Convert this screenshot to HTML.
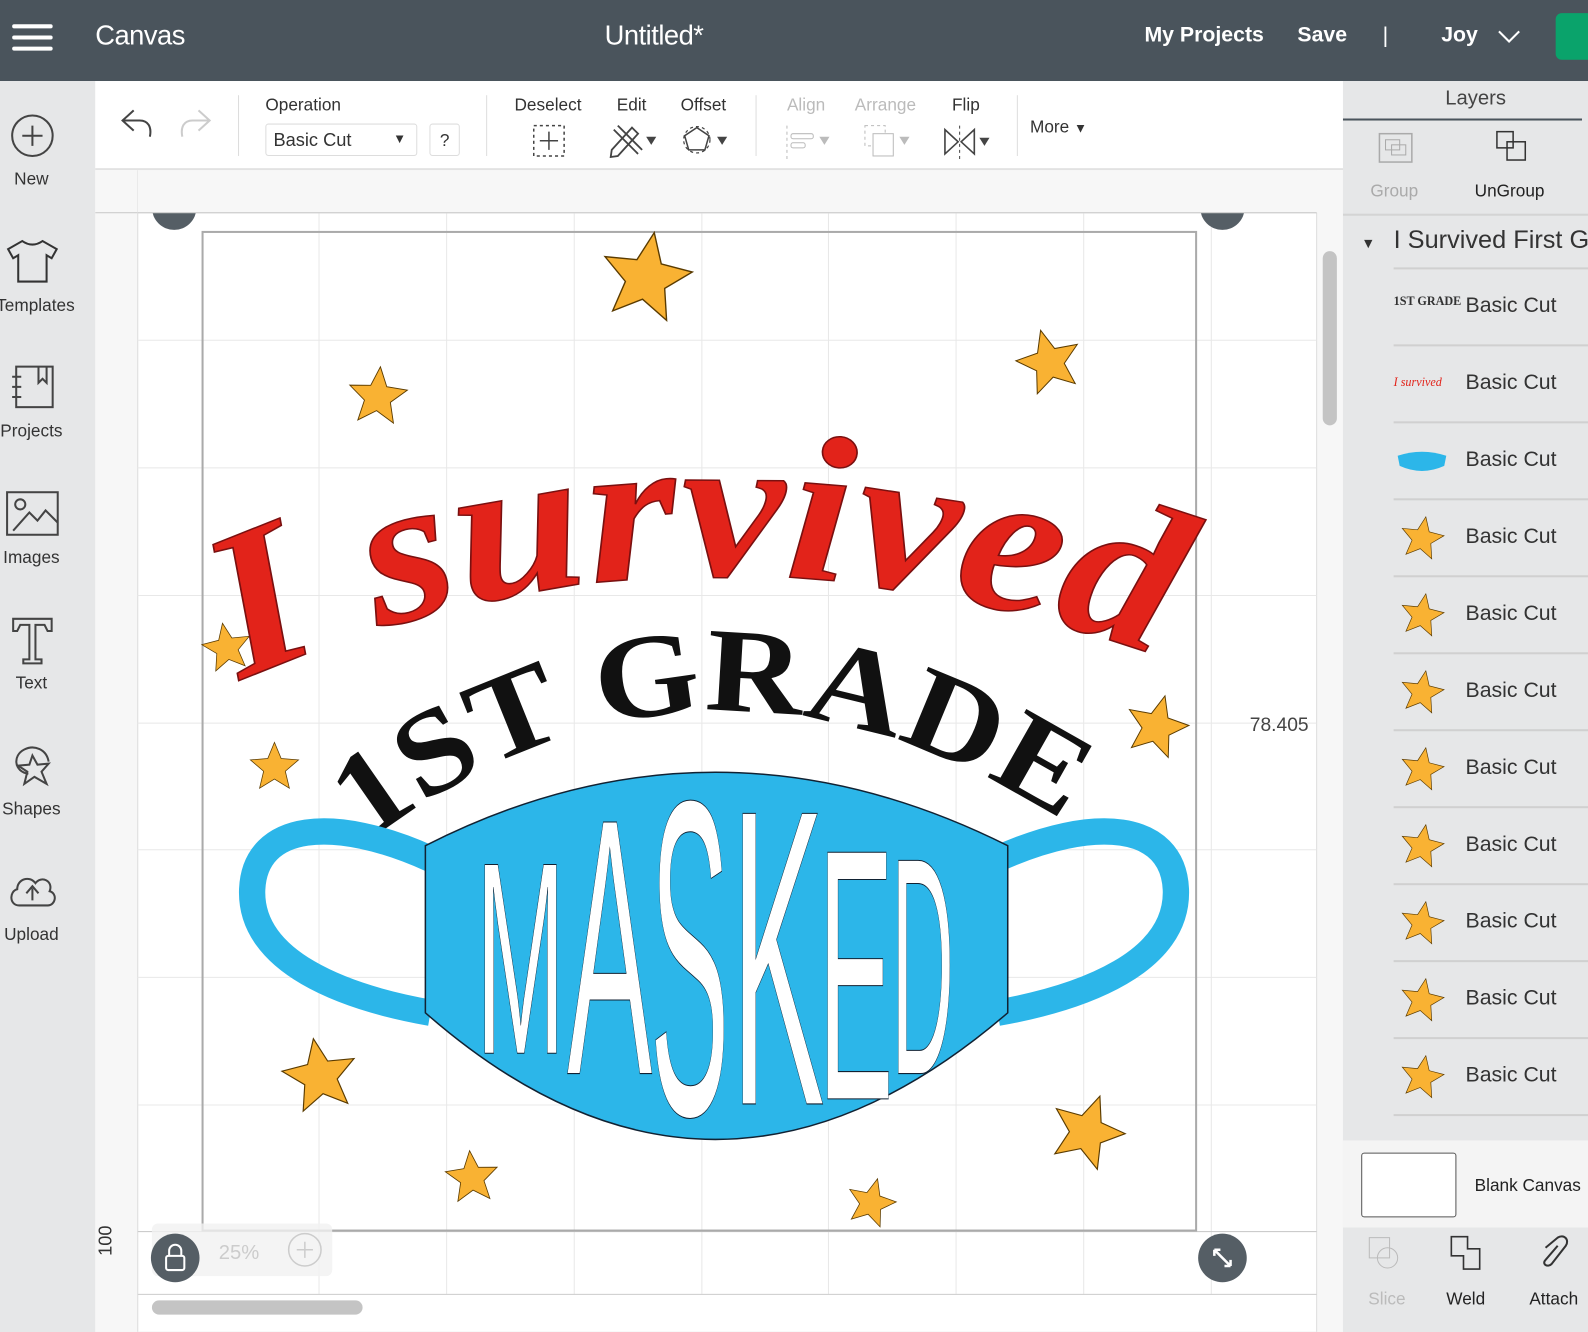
<!DOCTYPE html>
<html><head><meta charset="utf-8"><style>
*{margin:0;padding:0;box-sizing:border-box}
html,body{width:1588px;height:1315px;overflow:hidden;background:#e6e7e8}
#wrap{position:absolute;left:0;top:0;width:1568px;height:1300px;transform:scale(1.0128);transform-origin:0 0;font-family:"Liberation Sans",sans-serif;background:#e6e7e8}
.abs{position:absolute}
.top{left:0;top:0;width:1568px;height:80px;background:#4a545c;color:#fff}
.side{left:0;top:80px;width:94px;height:1235px;background:#e6e7e8}
.side .it{position:absolute;left:0;width:94px;text-align:center;font-size:17px;color:#333}
.tb{left:94px;top:80px;width:1232px;height:88px;background:#fff;border-bottom:2px solid #e2e2e2}
.lbl{position:absolute;font-size:17px;color:#333}
.dim{color:#bbb}
.vsep{position:absolute;top:14px;width:1px;height:60px;background:#ddd}
.rp{left:1326px;top:80px;width:262px;height:1235px;background:#e6e7e8}
.row{position:absolute;left:0;width:262px;height:76px}
.row .line{position:absolute;left:50px;right:0;bottom:0;height:2px;background:#d0d0d0}
.row span{position:absolute;left:121px;top:24px;font-size:21px;color:#333}
</style></head><body><div id="wrap">
<div class="abs top">
  <div class="abs" style="left:12px;top:24px;width:40px;height:4px;background:#fff;border-radius:2px"></div>
  <div class="abs" style="left:12px;top:35px;width:40px;height:4px;background:#fff;border-radius:2px"></div>
  <div class="abs" style="left:12px;top:46px;width:40px;height:4px;background:#fff;border-radius:2px"></div>
  <div class="abs" style="left:94px;top:20px;font-size:27px;letter-spacing:-0.5px">Canvas</div>
  <div class="abs" style="left:597px;top:20px;font-size:27px;letter-spacing:-0.5px">Untitled*</div>
  <div class="abs" style="left:1130px;top:23px;font-size:21px;font-weight:bold">My Projects</div>
  <div class="abs" style="left:1281px;top:23px;font-size:21px;font-weight:bold">Save</div>
  <div class="abs" style="left:1365px;top:22px;font-size:22px">|</div>
  <div class="abs" style="left:1423px;top:23px;font-size:21px;font-weight:bold">Joy</div>
  <svg class="abs" style="left:1478px;top:28px" width="24" height="16"><path d="M2 3 L12 13 L22 3" stroke="#fff" stroke-width="2" fill="none"/></svg>
  <div class="abs" style="left:1536px;top:13px;width:60px;height:46px;background:#0aa36b;border-radius:6px"></div>
</div>

<div class="abs side">
  <svg class="abs" style="left:10px;top:32px" width="44" height="44"><circle cx="22" cy="22" r="20" stroke="#444" stroke-width="2" fill="none"/><path d="M22 12v20M12 22h20" stroke="#444" stroke-width="2"/></svg>
  <div class="it" style="left:-16px;top:87px">New</div>
  <svg class="abs" style="left:6px;top:155px" width="52" height="46"><path d="M16 3 Q26 10 36 3 L50 11 L45 20 L40 17 L40 43 L12 43 L12 17 L7 20 L2 11 Z" stroke="#333" stroke-width="2" fill="none"/></svg>
  <div class="it" style="left:-12px;top:212px">Templates</div>
  <svg class="abs" style="left:10px;top:280px" width="46" height="46"><rect x="6" y="2" width="36" height="40" stroke="#444" stroke-width="2" fill="none"/><path d="M28 2v16l4-4 4 4V2M2 12h9M2 22h9M2 32h9" stroke="#444" stroke-width="2" fill="none"/></svg>
  <div class="it" style="left:-16px;top:336px">Projects</div>
  <svg class="abs" style="left:5px;top:404px" width="54" height="46"><rect x="2" y="2" width="50" height="42" stroke="#444" stroke-width="2" fill="none"/><circle cx="15" cy="14" r="5" stroke="#444" stroke-width="2" fill="none"/><path d="M8 40 L24 22 L32 30 L40 20 L52 32" stroke="#444" stroke-width="2" fill="none"/></svg>
  <div class="it" style="left:-16px;top:461px">Images</div>
  <svg class="abs" style="left:10px;top:528px" width="44" height="50"><path d="M3 3h38v12h-4l-3-6h-9v34h6v4H13v-4h6V9h-9l-3 6H3z" stroke="#444" stroke-width="2" fill="none"/></svg>
  <div class="it" style="left:-16px;top:585px">Text</div>
  <svg class="abs" style="left:10px;top:652px" width="46" height="48"><path d="M18 32 C4 30 2 14 14 8 C24 3 36 8 38 20 M22 14 L27 23 L38 22 L31 30 L36 42 L24 35 L14 42 L17 30 L8 24 L19 23 Z" stroke="#444" stroke-width="2" fill="none"/></svg>
  <div class="it" style="left:-16px;top:709px">Shapes</div>
  <svg class="abs" style="left:7px;top:780px" width="50" height="38"><path d="M12 34 C2 34 2 20 10 18 C10 8 22 4 28 12 C34 4 46 10 42 20 C50 22 48 34 40 34 Z" stroke="#444" stroke-width="2" fill="none"/><path d="M25 29V17M19 22l6-7 6 7" stroke="#444" stroke-width="2" fill="none"/></svg>
  <div class="it" style="left:-16px;top:833px">Upload</div>
</div>

<div class="abs tb">
  <svg class="abs" style="left:24px;top:25px" width="36" height="32"><path d="M14 4 L3 14 L14 24 M3 14 H20 C28 14 32 20 30 30" stroke="#444" stroke-width="2" fill="none"/></svg>
  <svg class="abs" style="left:80px;top:25px" width="36" height="32"><path d="M22 4 L33 14 L22 24 M33 14 H16 C8 14 4 20 6 30" stroke="#ccc" stroke-width="2" fill="none"/></svg>
  <div class="vsep" style="left:141px"></div>
  <div class="lbl" style="left:168px;top:14px">Operation</div>
  <div class="abs" style="left:168px;top:42px;width:150px;height:32px;border:1px solid #ddd;border-radius:3px;font-size:18px;color:#333;padding:5px 7px">Basic Cut<span style="position:absolute;right:10px;top:6px;font-size:13px">▼</span></div>
  <div class="abs" style="left:330px;top:42px;width:30px;height:32px;border:1px solid #ddd;border-radius:3px;font-size:17px;color:#333;text-align:center;padding-top:6px">?</div>
  <div class="vsep" style="left:386px"></div>
  <div class="lbl" style="left:414px;top:14px">Deselect</div>
  <svg class="abs" style="left:431px;top:42px" width="34" height="34"><rect x="2" y="2" width="30" height="30" stroke="#444" stroke-width="1.5" stroke-dasharray="3 3" fill="none"/><path d="M17 8v18M8 17h18" stroke="#444" stroke-width="1.5"/></svg>
  <div class="lbl" style="left:515px;top:14px">Edit</div>
  <svg class="abs" style="left:506px;top:40px" width="50" height="36"><path d="M4 28 L24 6 L30 12 L10 34 L3 35 Z M6 8 L30 32 M10 4 L34 28" stroke="#444" stroke-width="1.8" fill="none"/><path d="M38 15h10l-5 8z" fill="#444"/></svg>
  <div class="lbl" style="left:578px;top:14px">Offset</div>
  <svg class="abs" style="left:580px;top:42px" width="48" height="34"><path d="M14 4 L26 12 L22 26 L6 26 L2 12 Z" stroke="#444" stroke-width="1.5" fill="none"/><circle cx="14" cy="16" r="13" stroke="#444" stroke-width="1.2" stroke-dasharray="3 3" fill="none"/><path d="M34 13h10l-5 8z" fill="#444"/></svg>
  <div class="vsep" style="left:652px"></div>
  <div class="lbl dim" style="left:683px;top:14px">Align</div>
  <svg class="abs" style="left:680px;top:42px" width="50" height="36"><path d="M3 2v34" stroke="#bbb" stroke-dasharray="3 3"/><rect x="7" y="10" width="22" height="5" rx="2" stroke="#bbb" fill="none"/><rect x="7" y="19" width="14" height="5" rx="2" stroke="#bbb" fill="none"/><path d="M35 13h10l-5 8z" fill="#bbb"/></svg>
  <div class="lbl dim" style="left:750px;top:14px">Arrange</div>
  <svg class="abs" style="left:758px;top:42px" width="50" height="36"><rect x="2" y="2" width="20" height="20" stroke="#bbb" stroke-dasharray="3 3" fill="none"/><rect x="10" y="10" width="20" height="22" stroke="#bbb" fill="#fff"/><path d="M36 13h10l-5 8z" fill="#bbb"/></svg>
  <div class="lbl" style="left:846px;top:14px">Flip</div>
  <svg class="abs" style="left:836px;top:42px" width="52" height="36"><path d="M3 6 L16 18 L3 30 Z M32 6 L19 18 L32 30 Z" stroke="#444" stroke-width="1.6" fill="none"/><path d="M17.5 2v34" stroke="#444" stroke-dasharray="3 3"/><path d="M37 14h10l-5 8z" fill="#444"/></svg>
  <div class="vsep" style="left:910px"></div>
  <div class="lbl" style="left:923px;top:36px">More <span style="font-size:13px">▼</span></div>
</div>

<svg class="abs" style="left:94px;top:168px" width="1232" height="1147">
  <rect width="1232" height="1147" fill="#fff"/>
  <rect x="0" y="0" width="1232" height="42" fill="#f7f7f7"/>
  <rect x="0" y="0" width="42" height="1147" fill="#f7f7f7"/>
  <rect x="1206" y="0" width="26" height="1147" fill="#f7f7f7"/>
  <line x1="0" y1="42" x2="1206" y2="42" stroke="#ccc"/>
  <line x1="42" y1="0" x2="42" y2="1147" stroke="#ddd"/>
  <line x1="1206" y1="0" x2="1206" y2="1147" stroke="#ddd"/>
  <g stroke="#e8e8e8">
    <line x1="221" y1="42" x2="221" y2="1110"/><line x1="347" y1="42" x2="347" y2="1110"/><line x1="473" y1="42" x2="473" y2="1110"/><line x1="599" y1="42" x2="599" y2="1110"/><line x1="724" y1="42" x2="724" y2="1110"/><line x1="850" y1="42" x2="850" y2="1110"/><line x1="976" y1="42" x2="976" y2="1110"/><line x1="1102" y1="42" x2="1102" y2="1110"/>
    <line x1="42" y1="168" x2="1206" y2="168"/><line x1="42" y1="294" x2="1206" y2="294"/><line x1="42" y1="420" x2="1206" y2="420"/><line x1="42" y1="546" x2="1206" y2="546"/><line x1="42" y1="671" x2="1206" y2="671"/><line x1="42" y1="797" x2="1206" y2="797"/><line x1="42" y1="923" x2="1206" y2="923"/>
  </g>
  <g stroke="#ccc"><line x1="221" y1="34" x2="221" y2="42"/><line x1="347" y1="34" x2="347" y2="42"/><line x1="473" y1="34" x2="473" y2="42"/><line x1="599" y1="34" x2="599" y2="42"/><line x1="724" y1="34" x2="724" y2="42"/><line x1="850" y1="34" x2="850" y2="42"/><line x1="976" y1="34" x2="976" y2="42"/><line x1="1102" y1="34" x2="1102" y2="42"/></g>
  <line x1="42" y1="1048" x2="1206" y2="1048" stroke="#ccc"/>
  <line x1="42" y1="1110" x2="1206" y2="1110" stroke="#ccc"/>
  <rect x="1212" y="80" width="14" height="172" rx="7" fill="#c4c4c4"/>
  <rect x="56" y="1116" width="208" height="14" rx="7" fill="#c4c4c4"/>
  <text x="16" y="1072" transform="rotate(-90 16 1072)" font-size="18" fill="#333" font-family="Liberation Sans">100</text>
  <text x="1140" y="554" font-size="19" fill="#444" font-family="Liberation Sans">78.405</text>
</svg>

<svg class="abs" style="left:0;top:0" width="1326" height="1315" viewBox="0 0 1326 1315">
  <defs>
    <polygon id="st" points="0,-1 .265,-.364 .951,-.309 .428,.139 .588,.809 0,.45 -.588,.809 -.428,.139 -.951,-.309 -.265,-.364" fill="#f9b233" stroke="#5a3b00" stroke-width=".03"/>
    <path id="arc" d="M362 832 Q705 572 1082 832"/>
    <path id="arc2" d="M238 672 Q700 470 1178 662"/>
  </defs>
  <rect x="200" y="229" width="981" height="986" fill="none" stroke="#aaa" stroke-width="2"/>
  <circle cx="172" cy="205" r="22" fill="#555e65"/>
  <circle cx="1207" cy="205" r="22" fill="#555e65"/>
  <rect x="136" y="168" width="1190" height="42" fill="#f7f7f7"/>
  <line x1="136" y1="210" x2="1300" y2="210" stroke="#ccc"/>
  <use href="#st" transform="translate(638,275) rotate(10) scale(46)"/>
  <use href="#st" transform="translate(1036,358) rotate(-15) scale(33)"/>
  <use href="#st" transform="translate(373,392) rotate(5) scale(30)"/>
  <use href="#st" transform="translate(224,640) rotate(-10) scale(25)"/>
  <use href="#st" transform="translate(1142,718) rotate(15) scale(32)"/>
  <use href="#st" transform="translate(271,758) rotate(0) scale(25)"/>
  <use href="#st" transform="translate(316,1063) rotate(-10) scale(38)"/>
  <use href="#st" transform="translate(1073,1118) rotate(20) scale(38)"/>
  <use href="#st" transform="translate(466,1163) rotate(-5) scale(27)"/>
  <use href="#st" transform="translate(860,1188) rotate(15) scale(25)"/>
  <text font-family="Liberation Serif" font-style="italic" font-weight="bold" font-size="205" fill="#e2231a" stroke="#7a1010" stroke-width="1.5"><textPath href="#arc2" textLength="930" lengthAdjust="spacingAndGlyphs">I survived</textPath></text>
  <text font-family="Liberation Serif" font-weight="bold" font-size="118" fill="#111"><textPath href="#arc" textLength="740" lengthAdjust="spacingAndGlyphs">1ST GRADE</textPath></text>
  <g fill="none" stroke="#2cb6e9" stroke-width="26">
    <path d="M425 848 C330 805 252 812 249 878 C246 950 340 985 425 1000"/>
    <path d="M985 848 C1080 805 1158 812 1161 878 C1164 950 1070 985 985 1000"/>
  </g>
  <path d="M420 835 Q705 690 995 835 L995 1000 Q705 1250 420 1000 Z" fill="#2cb6e9" stroke="#123" stroke-width="1.5"/>
  <g font-family="Liberation Sans" fill="#fff" stroke="#123" stroke-width="1" lengthAdjust="spacingAndGlyphs">
    <text x="470" y="1040" font-size="271" textLength="88" lengthAdjust="spacingAndGlyphs">M</text>
    <text x="560" y="1060" font-size="361" textLength="84" lengthAdjust="spacingAndGlyphs">A</text>
    <text x="642" y="1100" font-size="444" textLength="78" lengthAdjust="spacingAndGlyphs">S</text>
    <text x="722" y="1090" font-size="417" textLength="92" lengthAdjust="spacingAndGlyphs">K</text>
    <text x="808" y="1085" font-size="354" textLength="74" lengthAdjust="spacingAndGlyphs">E</text>
    <text x="880" y="1060" font-size="306" textLength="62" lengthAdjust="spacingAndGlyphs">D</text>
  </g>
  <circle cx="1207" cy="1242" r="24" fill="#555e65"/>
  <path d="M1199 1234 l16 16 M1199 1234 h6 M1199 1234 v6 M1215 1250 h-6 M1215 1250 v-6" stroke="#fff" stroke-width="2.5"/>
  <rect x="150" y="1208" width="178" height="52" rx="6" fill="#f1f1f1" opacity=".8"/>
  <circle cx="173" cy="1242" r="24" fill="#555e65"/>
  <rect x="164" y="1240" width="18" height="14" rx="2" fill="none" stroke="#fff" stroke-width="2"/>
  <path d="M167 1240 v-5 a6 6 0 0 1 12 0 v5" stroke="#fff" stroke-width="2" fill="none"/>
  <text x="216" y="1243" font-family="Liberation Sans" font-size="20" fill="#ccc">25%</text>
  <circle cx="301" cy="1234" r="16" fill="none" stroke="#ccc" stroke-width="1.5"/>
  <path d="M301 1226v16M293 1234h16" stroke="#ccc" stroke-width="1.5"/>
</svg>

<div class="abs rp">
  <div class="abs" style="left:0;top:0;width:262px;height:40px;text-align:center;font-size:20px;color:#444;padding-top:6px">Layers</div>
  <div class="abs" style="left:0;top:37px;width:236px;height:2px;background:#4a545c"></div>
  <svg class="abs" style="left:34px;top:50px" width="36" height="32"><rect x="2" y="2" width="32" height="28" stroke="#aaa" stroke-width="1.5" fill="none"/><rect x="8" y="8" width="14" height="10" stroke="#aaa" fill="none"/><rect x="14" y="13" width="14" height="10" stroke="#aaa" fill="none"/></svg>
  <div class="abs" style="left:27px;top:99px;font-size:17px;color:#aaa">Group</div>
  <svg class="abs" style="left:150px;top:48px" width="34" height="34"><rect x="2" y="2" width="16" height="16" stroke="#333" stroke-width="1.5" fill="none"/><rect x="12" y="12" width="18" height="18" stroke="#333" stroke-width="1.5" fill="none"/></svg>
  <div class="abs" style="left:130px;top:99px;font-size:17px;color:#222">UnGroup</div>
  <div class="abs" style="left:0;top:131px;width:262px;height:2px;background:#d4d4d4"></div>
  <div class="abs" style="left:18px;top:152px;font-size:14px;color:#333">▼</div>
  <div class="abs" style="left:50px;top:143px;font-size:25px;color:#333;white-space:nowrap">I Survived First G</div>
  <div class="abs" style="left:50px;top:184px;width:212px;height:2px;background:#d0d0d0"></div>
  <div class="row" style="top:186px"><span style="top:24px;left:50px;font-size:12px;font-weight:bold;font-family:'Liberation Serif'">1ST GRADE</span><span>Basic Cut</span><div class="line"></div></div>
  <div class="row" style="top:262px"><span style="top:28px;left:50px;font-size:12px;color:#e2231a;font-style:italic;font-family:'Liberation Serif'">I survived</span><span>Basic Cut</span><div class="line"></div></div>
  <div class="row" style="top:338px"><svg class="abs" style="left:50px;top:26px" width="56" height="22"><path d="M4 6 Q28 -2 52 6 L50 16 Q28 26 6 16 Z" fill="#2cb6e9"/></svg><span>Basic Cut</span><div class="line"></div></div>
  <div class="row" style="top:414px"><svg class="abs" style="left:54px;top:14px" width="48" height="48"><use href="#st2"/></svg><span>Basic Cut</span><div class="line"></div></div>
  <div class="row" style="top:490px"><svg class="abs" style="left:54px;top:14px" width="48" height="48"><use href="#st2"/></svg><span>Basic Cut</span><div class="line"></div></div>
  <div class="row" style="top:566px"><svg class="abs" style="left:54px;top:14px" width="48" height="48"><use href="#st2"/></svg><span>Basic Cut</span><div class="line"></div></div>
  <div class="row" style="top:642px"><svg class="abs" style="left:54px;top:14px" width="48" height="48"><use href="#st2"/></svg><span>Basic Cut</span><div class="line"></div></div>
  <div class="row" style="top:718px"><svg class="abs" style="left:54px;top:14px" width="48" height="48"><use href="#st2"/></svg><span>Basic Cut</span><div class="line"></div></div>
  <div class="row" style="top:794px"><svg class="abs" style="left:54px;top:14px" width="48" height="48"><use href="#st2"/></svg><span>Basic Cut</span><div class="line"></div></div>
  <div class="row" style="top:870px"><svg class="abs" style="left:54px;top:14px" width="48" height="48"><use href="#st2"/></svg><span>Basic Cut</span><div class="line"></div></div>
  <div class="row" style="top:946px"><svg class="abs" style="left:54px;top:14px" width="48" height="48"><use href="#st2"/></svg><span>Basic Cut</span><div class="line"></div></div>
  <div class="abs" style="left:0;top:1046px;width:262px;height:86px;background:#f4f4f4"></div>
  <div class="abs" style="left:18px;top:1058px;width:94px;height:64px;border:1.5px solid #555;border-radius:3px;background:#fff"></div>
  <div class="abs" style="left:130px;top:1081px;font-size:17px;color:#222">Blank Canvas</div>
  <svg class="abs" style="left:24px;top:1140px" width="34" height="36"><rect x="2" y="2" width="20" height="20" stroke="#bbb" fill="none"/><circle cx="20" cy="22" r="10" stroke="#bbb" fill="none"/></svg>
  <div class="abs" style="left:25px;top:1193px;font-size:17px;color:#bbb">Slice</div>
  <svg class="abs" style="left:104px;top:1138px" width="34" height="38"><path d="M3 3h16v12h12v20H15V22H3z" stroke="#333" stroke-width="1.6" fill="none"/></svg>
  <div class="abs" style="left:102px;top:1193px;font-size:17px;color:#222">Weld</div>
  <svg class="abs" style="left:192px;top:1138px" width="34" height="38"><path d="M8 14 L20 4 C26 0 32 6 28 12 L14 30 C10 34 4 30 8 26 L20 12" stroke="#333" stroke-width="2" fill="none"/></svg>
  <div class="abs" style="left:184px;top:1193px;font-size:17px;color:#222">Attach</div>
</div>
<svg width="0" height="0" style="position:absolute"><defs><g id="st2"><polygon transform="translate(24,24) rotate(10) scale(22)" points="0,-1 .265,-.364 .951,-.309 .428,.139 .588,.809 0,.45 -.588,.809 -.428,.139 -.951,-.309 -.265,-.364" fill="#f9b233" stroke="#5a3b00" stroke-width=".03"/></g></defs></svg>
</div></body></html>
